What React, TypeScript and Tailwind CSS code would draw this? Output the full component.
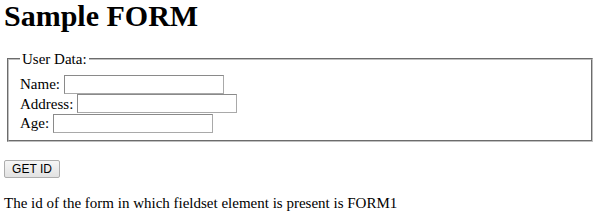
import React, { useState } from 'react';

const App: React.FC = () => {
  const [formId, setFormId] = useState('FORM1');

  const inputClass =
    'w-[160px] h-[19px] border border-[#a9a9a9] border-t-[#8a8a8a] border-l-[#8a8a8a] bg-white px-[2px] text-[13px] outline-none';

  return (
    <div className="bg-white text-black px-[4px] font-['Liberation_Serif','Times_New_Roman',serif] text-[15px] leading-normal">
      <h1 className="text-[30px] leading-[31px] font-bold m-0">Sample FORM</h1>

      <form id="FORM1" className="mt-[17px]">
        <fieldset className="mx-[3px] border-2 [border-style:groove] border-[#c0c0c0] px-[11px] pt-[4px] pb-[7px]">
          <legend className="px-[2px]">User Data:</legend>
          <div className="flex items-center h-[19.5px]">
            <span>Name:</span>
            <input type="text" className={`ml-[4px] ${inputClass}`} />
          </div>
          <div className="flex items-center h-[19.5px]">
            <span>Address:</span>
            <input type="text" className={`ml-[4px] ${inputClass}`} />
          </div>
          <div className="flex items-center h-[19.5px]">
            <span>Age:</span>
            <input type="text" className={`ml-[4px] ${inputClass}`} />
          </div>
        </fieldset>
      </form>

      <div className="mt-[18px]">
        <button
          type="button"
          onClick={() => setFormId('FORM1')}
          className="w-[56px] h-[18px] flex items-center justify-center border border-[#adadad] rounded-[2px] bg-gradient-to-b from-[#f6f6f6] to-[#e2e2e2] font-['Liberation_Sans',Arial,sans-serif] text-[12px] leading-none"
        >
          GET ID
        </button>
      </div>

      <p className="mt-[14px]">
        The id of the form in which fieldset element is present is {formId}
      </p>
    </div>
  );
};

export default App;
